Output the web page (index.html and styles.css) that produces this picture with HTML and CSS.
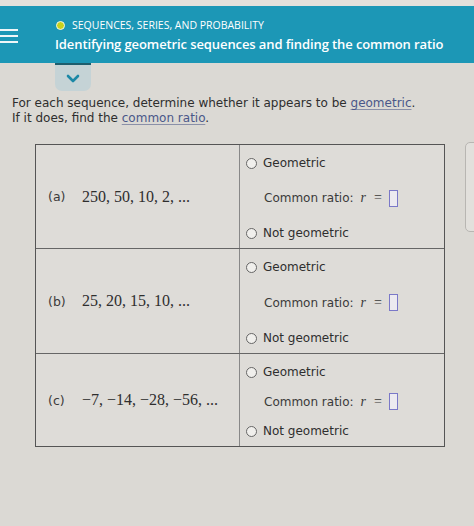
FILE: index.html
```
<!DOCTYPE html>
<html>
<head>
<meta charset="utf-8">
<link rel="stylesheet" href="styles.css">
</head>
<body>
<div class="topstrip"></div>
<header class="header">
  <div class="menu"><span></span><span></span><span></span></div>
  <div class="titles">
    <div class="category"><span class="dot"></span>SEQUENCES, SERIES, AND PROBABILITY</div>
    <div class="title">Identifying geometric sequences and finding the common ratio</div>
  </div>
</header>
<div class="tabrow">
  <div class="tab">
    <svg width="14" height="9" viewBox="0 0 14 9"><path d="M2 2 L7 7 L12 2" fill="none" stroke="#1b88a6" stroke-width="2.6" stroke-linecap="round" stroke-linejoin="round"/></svg>
  </div>
</div>
<p class="intro">For each sequence, determine whether it appears to be <span class="link">geometric</span>.<br>If it does, find the <span class="link">common ratio</span>.</p>
<div class="scrollhint"></div>
<div class="table">
  <div class="row r1">
    <div class="seq"><span class="lbl">(a)</span><span class="math">250, 50, 10, 2, ...</span></div>
    <div class="opts">
      <div class="opt"><span class="radio"></span>Geometric</div>
      <div class="ratio">Common ratio: <span class="r">r</span> <span class="eq">=</span> <span class="box"></span></div>
      <div class="opt"><span class="radio"></span>Not geometric</div>
    </div>
  </div>
  <div class="row r2">
    <div class="seq"><span class="lbl">(b)</span><span class="math">25, 20, 15, 10, ...</span></div>
    <div class="opts">
      <div class="opt"><span class="radio"></span>Geometric</div>
      <div class="ratio">Common ratio: <span class="r">r</span> <span class="eq">=</span> <span class="box"></span></div>
      <div class="opt"><span class="radio"></span>Not geometric</div>
    </div>
  </div>
  <div class="row r3">
    <div class="seq"><span class="lbl">(c)</span><span class="math">&minus;7, &minus;14, &minus;28, &minus;56, ...</span></div>
    <div class="opts">
      <div class="opt"><span class="radio"></span>Geometric</div>
      <div class="ratio">Common ratio: <span class="r">r</span> <span class="eq">=</span> <span class="box"></span></div>
      <div class="opt"><span class="radio"></span>Not geometric</div>
    </div>
  </div>
</div>
</body>
</html>
```
FILE: styles.css
```
html, body {
  margin: 0;
  padding: 0;
}
body {
  width: 474px;
  height: 526px;
  overflow: hidden;
  background: #dbd9d4;
  font-family: "DejaVu Sans", Verdana, sans-serif;
  color: #2e2e2e;
  position: relative;
}
.topstrip {
  height: 6px;
  background: #e3e0db;
}
.header {
  height: 57px;
  background: #1c97b6;
  display: flex;
  align-items: flex-start;
}
.menu {
  width: 18px;
  padding-top: 23px;
  display: flex;
  flex-direction: column;
  gap: 4px;
}
.menu span {
  display: block;
  height: 2px;
  background: #eef6f8;
}
.titles {
  margin-left: 37px;
  padding-top: 12px;
  color: #fff;
}
.category {
  font-family: "Open Sans", sans-serif;
  font-size: 10.5px;
  line-height: 14px;
  display: flex;
  align-items: center;
}
.dot {
  width: 9px;
  height: 9px;
  border-radius: 50%;
  background: #c8d21c;
  border: 1.5px solid #f4f7e8;
  margin-left: 1px;
  margin-right: 7px;
  box-sizing: border-box;
}
.title {
  font-family: "Open Sans", sans-serif;
  font-weight: 600;
  font-size: 13px;
  line-height: 18px;
  margin-top: 3px;
  letter-spacing: -0.1px;
}
.tabrow {
  padding-left: 55px;
}
.tab {
  width: 36px;
  height: 26px;
  background: #c5d3d6;
  border-top: 2px solid #1e5e6e;
  border-radius: 0 0 7px 7px;
  display: flex;
  align-items: center;
  justify-content: center;
}
.intro {
  margin: 5px 0 0 12px;
  font-size: 12px;
  line-height: 15px;
  color: #2e2e2e;
}
.link {
  color: #4a5789;
  text-decoration: underline;
  text-decoration-color: #8a90a8;
  text-underline-offset: 2px;
}
.scrollhint {
  position: absolute;
  left: 465px;
  top: 142px;
  width: 14px;
  height: 88px;
  border: 1px solid #b8b6b2;
  border-radius: 5px;
  background: #e2e0dc;
}
.table {
  margin: 18px 0 0 35px;
  width: 408px;
  border: 1px solid #555;
  display: flex;
  flex-direction: column;
  background: #dedcd8;
}
.row {
  display: flex;
  border-top: 1px solid #666;
}
.row.r1 {
  border-top: none;
  height: 103px;
}
.row.r2 {
  height: 104px;
}
.row.r3 {
  height: 92px;
}
.seq {
  width: 204px;
  border-right: 1px solid #888;
  display: flex;
  align-items: center;
  padding-left: 12px;
  box-sizing: border-box;
}
.lbl {
  font-size: 12.5px;
  color: #3a3a3a;
  width: 34px;
}
.math {
  font-family: "Liberation Serif", "Times New Roman", serif;
  font-size: 16px;
  color: #2e2e2e;
}
.opts {
  flex: 1;
  display: flex;
  flex-direction: column;
  justify-content: space-between;
  padding: 11px 0 8px 6px;
}
.opt {
  display: flex;
  align-items: center;
  font-size: 12px;
  color: #2e2e2e;
}
.radio {
  width: 11px;
  height: 11px;
  border-radius: 50%;
  border: 1px solid #666;
  box-sizing: border-box;
  margin-right: 6px;
  background: #f0efec;
}
.ratio {
  padding-left: 18px;
  font-size: 12px;
  color: #3a3a3a;
  display: flex;
  align-items: center;
}
.r {
  font-family: "Liberation Serif", serif;
  font-style: italic;
  font-size: 14px;
  margin-left: 7px;
}
.eq {
  font-family: "Liberation Serif", serif;
  font-size: 14px;
  margin: 0 7px 0 8px;
}
.box {
  width: 9px;
  height: 17px;
  border: 1.5px solid #7a78c8;
  box-sizing: border-box;
  background: #eceaf0;
}
```
